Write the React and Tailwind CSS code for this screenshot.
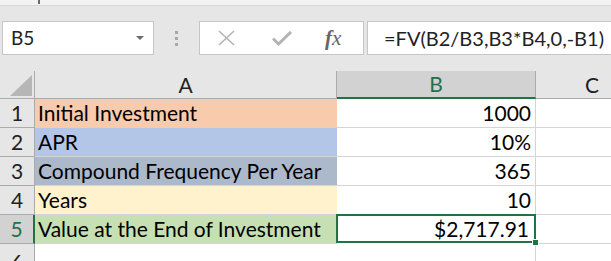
const rows = [
  { n: 1, label: "Initial Investment", value: "1000", bg: "bg-[#f8cbad]" },
  { n: 2, label: "APR", value: "10%", bg: "bg-[#b4c6e7]" },
  { n: 3, label: "Compound Frequency Per Year", value: "365", bg: "bg-[#acb9ca]" },
  { n: 4, label: "Years", value: "10", bg: "bg-[#fff2cc]" },
  { n: 5, label: "Value at the End of Investment", value: "$2,717.91", bg: "bg-[#c6e0b4]" },
];

const font = { fontFamily: "Lato, 'Liberation Sans', sans-serif" };

const App = () => {
  return (
    <div className="w-[611px] h-[261px] overflow-hidden bg-[#e6e6e6] text-black" style={font}>
      {/* ribbon edge */}
      <div className="h-[6px] bg-[#f3f3f3] border-b border-[#d8d8d8] relative">
        <div className="absolute left-[38px] top-0 w-[2px] h-[4px] bg-[#6a6a6a]" />
      </div>

      {/* formula bar */}
      <div className="flex items-center h-[34px] mt-[15px] pl-[2px]">
        <div className="w-[152px] h-[34px] bg-white border border-[#c6c6c6] flex items-center justify-between pl-[8px] pr-[9px]">
          <span className="text-[19px] text-[#222]">B5</span>
          <svg width="8" height="5" viewBox="0 0 8 5">
            <path d="M0 0h8L4 4z" fill="#6b6b6b" />
          </svg>
        </div>
        <div className="w-[45px] flex flex-col items-center gap-[3px]">
          <div className="w-[3px] h-[3px] bg-[#a8a8a8]" />
          <div className="w-[3px] h-[3px] bg-[#a8a8a8]" />
          <div className="w-[3px] h-[3px] bg-[#a8a8a8]" />
        </div>
        <div className="w-[165px] h-[34px] bg-white border border-[#c6c6c6] flex items-center">
          <svg className="ml-[18px]" width="17" height="16" viewBox="0 0 17 16">
            <path d="M1 1l15 14M16 1L1 15" stroke="#b3b3b3" strokeWidth="1.6" />
          </svg>
          <svg className="ml-[37px]" width="20" height="15" viewBox="0 0 20 15">
            <path d="M1 7.5l5.5 5.5L19 1" stroke="#b3b3b3" strokeWidth="3" fill="none" />
          </svg>
          <span
            className="ml-[33px] text-[21px] italic text-[#666] leading-none"
            style={{ fontFamily: "'Liberation Serif', 'DejaVu Serif', serif" }}
          >
            <span className="font-bold">f</span>x
          </span>
        </div>
        <div className="flex-1 ml-[3px] h-[34px] bg-white border border-[#c6c6c6] border-r-0 flex items-center pl-[16px]">
          <span className="text-[20px] text-[#222]">=FV(B2/B3,B3*B4,0,-B1)</span>
        </div>
      </div>

      {/* sheet */}
      <div className="mt-[16px] grid grid-cols-[35px_302px_199px_1fr] bg-white">
        <div className="h-[28px] bg-[#e6e6e6] border-r border-b border-[#ababab] relative">
          <svg className="absolute left-[10px] top-[4px]" width="22" height="21" viewBox="0 0 22 21">
            <path d="M22 0V21H0z" fill="#b6b6b6" />
          </svg>
        </div>
        <div className="h-[28px] bg-[#e6e6e6] border-r border-b border-[#ababab] flex items-center justify-center text-[21px] text-[#222]">
          A
        </div>
        <div className="h-[28px] bg-[#d2d2d2] border-r border-[#ababab] border-b-2 border-b-[#217346] flex items-center justify-center text-[21px] text-[#217346]">
          B
        </div>
        <div className="h-[28px] bg-[#e6e6e6] border-b border-[#ababab] flex items-center pl-[49px] text-[21px] text-[#222]">
          C
        </div>

        {rows.map((r) => {
          const sel = r.n === 5;
          return [
            <div
              key={`n${r.n}`}
              className={
                sel
                  ? "h-[29px] bg-[#d2d2d2] border-r-2 border-r-[#217346] border-b border-[#ababab] flex items-center justify-center text-[21px] text-[#217346]"
                  : "h-[29px] bg-[#e6e6e6] border-r border-b border-[#ababab] flex items-center justify-center text-[21px] text-[#222]"
              }
            >
              {r.n}
            </div>,
            <div
              key={`a${r.n}`}
              className={`h-[29px] ${r.bg} border-b border-[#d4d4d4] flex items-center pl-[3px] text-[21px] whitespace-nowrap`}
            >
              {r.label}
            </div>,
            <div
              key={`b${r.n}`}
              className={
                sel
                  ? "h-[29px] border-2 border-[#217346] -mt-px -ml-px flex items-center justify-end pr-[5px] text-[21px] relative"
                  : "h-[29px] border-r border-b border-[#d4d4d4] flex items-center justify-end pr-[4px] text-[21px]"
              }
            >
              {r.value}
              {sel && <div className="absolute -right-[5px] -bottom-[5px] w-[7px] h-[7px] bg-[#217346] border border-white" />}
            </div>,
            <div key={`c${r.n}`} className="h-[29px] border-b border-[#d4d4d4]" />,
          ];
        })}

        <div className="h-[29px] bg-[#e6e6e6] border-r border-[#ababab] flex items-start justify-center pt-[2px] text-[21px] text-[#222]">
          6
        </div>
        <div className="h-[29px]" />
        <div className="h-[29px] border-r border-[#d4d4d4]" />
        <div className="h-[29px]" />
      </div>
    </div>
  );
};

export default App;
